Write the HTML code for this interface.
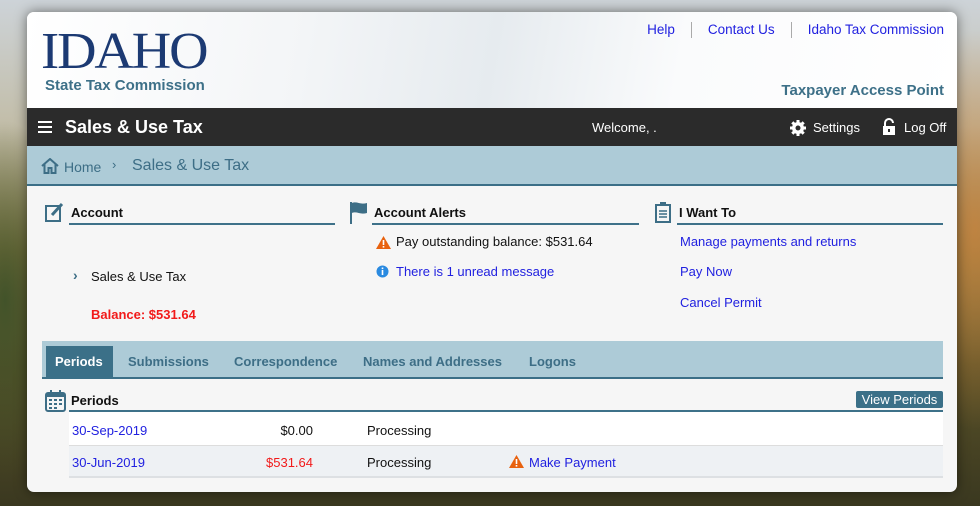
<!DOCTYPE html>
<html><head><meta charset="utf-8"><style>
*{margin:0;padding:0;box-sizing:border-box}
body{width:980px;height:506px;overflow:hidden;font-family:"Liberation Sans",sans-serif;position:relative;
background:
radial-gradient(ellipse 80px 200px at 975px 230px,rgba(200,130,60,.8),rgba(200,130,60,0)),
radial-gradient(ellipse 60px 180px at 5px 300px,rgba(60,80,40,.9),rgba(60,80,40,0)),
linear-gradient(180deg,#cdd3d8 0%,#c2bda8 25%,#8e7d45 50%,#5a5228 72%,#3a3820 100%);}
.card{position:absolute;left:27px;top:12px;width:930px;height:480px;background:#f6f6f6;border-radius:7px;overflow:hidden;box-shadow:0 0 12px rgba(0,0,0,.5)}
.hdr{position:absolute;left:0;top:0;width:930px;height:96px;background:linear-gradient(100deg,#fff 0%,#f3f5f7 30%,#e6ebef 50%,#fafbfc 70%,#fff 100%)}
.logo{position:absolute;left:14px;top:14px;font-family:"Liberation Serif",serif;font-size:52px;color:#1c3a73;letter-spacing:-2px;line-height:52px;transform:scaleX(1.05);transform-origin:left}
.stc{position:absolute;left:18px;top:65px;font-size:15px;font-weight:bold;color:#3d7088}
.top{position:absolute;right:13px;top:10px;font-size:13.5px;color:#2121e0}
.top span{display:inline-block;padding:0 16px;border-left:1px solid #aaa;line-height:16px}
.top span:first-child{border:none}
.top span:last-child{padding-right:0}
.tap{position:absolute;right:13px;top:70px;font-size:15px;font-weight:bold;color:#3d7088}
.bar{position:absolute;left:0;top:96px;width:930px;height:38px;background:#2b2b2b;color:#fff}
.bc{position:absolute;left:0;top:134px;width:930px;height:40px;background:#adcbd7;border-bottom:2px solid #3b6f87}
.t{position:absolute;white-space:nowrap}
.sec{position:absolute;font-size:13px;font-weight:bold;color:#111;border-bottom:2px solid #3e7189;padding-bottom:3px;padding-left:2px}
.blue{color:#2121e0}
.tabs{position:absolute;left:15px;top:329px;width:901px;height:38px;background:#adcbd7;border-bottom:2px solid #3b6f87}
.tab{position:absolute;top:13px;font-size:13px;font-weight:bold;color:#3d6e86}
.row{position:absolute;left:42px;width:874px;font-size:13px}
</style></head><body>
<div class="card">
 <div class="hdr">
  <div class="logo">IDAHO</div>
  <div class="stc">State Tax Commission</div>
  <div class="top"><span>Help</span><span>Contact Us</span><span>Idaho Tax Commission</span></div>
  <div class="tap">Taxpayer Access Point</div>
 </div>
 <div class="bar">
  <div class="t" style="left:11px;top:13px;width:14px;height:2px;background:#fff;box-shadow:0 5px 0 #fff,0 10px 0 #fff"></div>
  <div class="t" style="left:38px;top:9px;font-size:18px;font-weight:bold">Sales &amp; Use Tax</div>
  <div class="t" style="left:565px;top:12px;font-size:13px">Welcome, .</div>
  <svg class="t" style="left:762px;top:11px" width="18" height="18" viewBox="0 0 18 18"><circle cx="9" cy="9" r="6" fill="#fff"/><g stroke="#fff" stroke-width="3"><line x1="9" y1="1" x2="9" y2="17"/><line x1="1" y1="9" x2="17" y2="9"/><line x1="3.3" y1="3.3" x2="14.7" y2="14.7"/><line x1="14.7" y1="3.3" x2="3.3" y2="14.7"/></g><circle cx="9" cy="9" r="2.5" fill="#2b2b2b"/></svg>
  <div class="t" style="left:786px;top:12px;font-size:13px">Settings</div>
  <svg class="t" style="left:855px;top:10px" width="14" height="18" viewBox="0 0 14 18"><path d="M3 8V5a4 4 0 0 1 8 0" stroke="#fff" stroke-width="2" fill="none"/><rect x="1" y="8" width="12" height="9" fill="#fff"/><rect x="6" y="11" width="2" height="3" fill="#2b2b2b"/></svg>
  <div class="t" style="left:877px;top:12px;font-size:13px">Log Off</div>
 </div>
 <div class="bc">
  <svg class="t" style="left:14px;top:12px" width="18" height="16" viewBox="0 0 18 16"><path d="M1 8L9 1l8 7M3.5 6v9h4v-5h3v5h4V6" stroke="#3d6e86" stroke-width="2" fill="none"/></svg>
  <div class="t" style="left:37px;top:13px;font-size:14px;color:#3d6e86">Home</div>
  <div class="t" style="left:85px;top:11px;font-size:13px;color:#3d6e86">›</div>
  <div class="t" style="left:105px;top:11px;font-size:16px;color:#3d6e86">Sales &amp; Use Tax</div>
 </div>
 <svg class="t" style="left:17px;top:189px" width="22" height="22" viewBox="0 0 22 22"><rect x="2" y="5" width="14" height="15" fill="none" stroke="#3d6e86" stroke-width="2"/><path d="M8 14l10-11" stroke="#3d6e86" stroke-width="3"/></svg>
 <div class="sec" style="left:42px;top:193px;width:266px">Account</div>
 <svg class="t" style="left:322px;top:189px" width="20" height="24" viewBox="0 0 20 24"><rect x="1" y="1" width="2" height="22" fill="#3d6e86"/><path d="M3 2c5-2 8 2 15 0v10c-7 2-10-2-15 0z" fill="#3d6e86"/></svg>
 <div class="sec" style="left:345px;top:193px;width:267px">Account Alerts</div>
 <svg class="t" style="left:627px;top:189px" width="18" height="22" viewBox="0 0 18 22"><rect x="2" y="4" width="14" height="17" fill="none" stroke="#3d6e86" stroke-width="2"/><rect x="6" y="1" width="6" height="4" fill="#3d6e86"/><path d="M5 10h8M5 13h8M5 16h8" stroke="#3d6e86" stroke-width="1.5"/></svg>
 <div class="sec" style="left:650px;top:193px;width:266px">I Want To</div>
 <div class="t" style="left:46px;top:255px;font-size:14px;font-weight:bold;color:#3d6e86">›</div>
 <div class="t" style="left:64px;top:257px;font-size:13px;color:#111">Sales &amp; Use Tax</div>
 <div class="t" style="left:64px;top:295px;font-size:13px;font-weight:bold;color:#f21a1a">Balance: $531.64</div>
 <svg class="t" style="left:349px;top:224px" width="15" height="13" viewBox="0 0 15 13"><path d="M7.5 0L15 13H0z" fill="#e8620f"/><rect x="6.7" y="4" width="1.6" height="5" fill="#fff"/><rect x="6.7" y="10" width="1.6" height="1.6" fill="#fff"/></svg>
 <div class="t" style="left:369px;top:222px;font-size:13px;color:#111">Pay outstanding balance: $531.64</div>
 <svg class="t" style="left:349px;top:253px" width="13" height="14" viewBox="0 0 13 14"><circle cx="6.5" cy="6.5" r="6" fill="#2a8ae0"/><rect x="5.7" y="5" width="1.6" height="5" fill="#fff"/><rect x="5.7" y="2.5" width="1.6" height="1.6" fill="#fff"/></svg>
 <div class="t blue" style="left:369px;top:252px;font-size:13px">There is 1 unread message</div>
 <div class="t blue" style="left:653px;top:222px;font-size:13px">Manage payments and returns</div>
 <div class="t blue" style="left:653px;top:252px;font-size:13px">Pay Now</div>
 <div class="t blue" style="left:653px;top:283px;font-size:13px">Cancel Permit</div>
 <div class="tabs">
  <div class="t" style="left:4px;top:5px;width:67px;height:33px;background:#3b7088"></div>
  <div class="tab" style="left:13px;color:#fff">Periods</div>
  <div class="tab" style="left:86px">Submissions</div>
  <div class="tab" style="left:192px">Correspondence</div>
  <div class="tab" style="left:321px">Names and Addresses</div>
  <div class="tab" style="left:487px">Logons</div>
 </div>
 <svg class="t" style="left:18px;top:378px" width="21" height="22" viewBox="0 0 21 22"><rect x="1" y="3" width="19" height="18" rx="2" fill="none" stroke="#3d6e86" stroke-width="2"/><rect x="1" y="3" width="19" height="4" fill="#3d6e86"/><rect x="5" y="0" width="2" height="5" fill="#3d6e86"/><rect x="14" y="0" width="2" height="5" fill="#3d6e86"/><g fill="#3d6e86"><rect x="4" y="9" width="3" height="2"/><rect x="9" y="9" width="3" height="2"/><rect x="14" y="9" width="3" height="2"/><rect x="4" y="13" width="3" height="2"/><rect x="9" y="13" width="3" height="2"/><rect x="14" y="13" width="3" height="2"/><rect x="4" y="17" width="3" height="2"/><rect x="9" y="17" width="3" height="2"/></g></svg>
 <div class="t" style="left:44px;top:381px;font-size:13px;font-weight:bold;color:#111">Periods</div>
 <div class="t" style="left:829px;top:379px;width:87px;height:17px;background:#3b7088;border-radius:2px;color:#fff;font-size:13px;text-align:center;line-height:17px">View Periods</div>
 <div class="t" style="left:42px;top:398px;width:874px;height:2px;background:#3e7189"></div>
 <div class="row" style="top:400px;height:34px;background:#fff;border-bottom:1px solid #ddd">
  <div class="t blue" style="left:3px;top:11px">30-Sep-2019</div>
  <div class="t" style="right:630px;top:11px;color:#111">$0.00</div>
  <div class="t" style="left:298px;top:11px;color:#111">Processing</div>
 </div>
 <div class="row" style="top:434px;height:32px;background:#eef1f4;border-bottom:2px solid #dde0e3">
  <div class="t blue" style="left:3px;top:9px">30-Jun-2019</div>
  <div class="t" style="right:630px;top:9px;color:#f21a1a">$531.64</div>
  <div class="t" style="left:298px;top:9px;color:#111">Processing</div>
  <svg class="t" style="left:440px;top:9px" width="15" height="13" viewBox="0 0 15 13"><path d="M7.5 0L15 13H0z" fill="#e8620f"/><rect x="6.7" y="4" width="1.6" height="5" fill="#fff"/><rect x="6.7" y="10" width="1.6" height="1.6" fill="#fff"/></svg>
  <div class="t blue" style="left:460px;top:9px">Make Payment</div>
 </div>
</div>
</body></html>
